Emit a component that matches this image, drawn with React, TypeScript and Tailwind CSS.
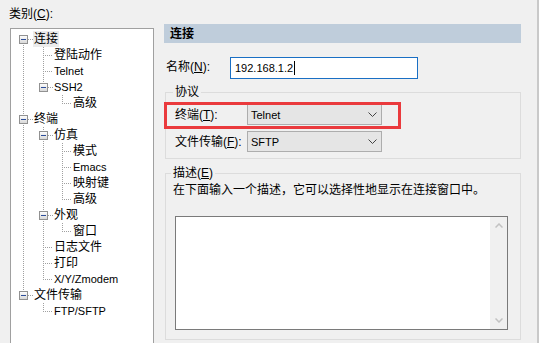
import React from "react";

type Row = { l: number; t: string; box?: boolean; latin?: boolean; sel?: boolean };

const rows: Row[] = [
  { l: 0, t: "连接", box: true, sel: true },
  { l: 1, t: "登陆动作" },
  { l: 1, t: "Telnet", latin: true },
  { l: 1, t: "SSH2", box: true, latin: true },
  { l: 2, t: "高级" },
  { l: 0, t: "终端", box: true },
  { l: 1, t: "仿真", box: true },
  { l: 2, t: "模式" },
  { l: 2, t: "Emacs", latin: true },
  { l: 2, t: "映射键" },
  { l: 2, t: "高级" },
  { l: 1, t: "外观", box: true },
  { l: 2, t: "窗口" },
  { l: 1, t: "日志文件" },
  { l: 1, t: "打印" },
  { l: 1, t: "X/Y/Zmodem", latin: true },
  { l: 0, t: "文件传输", box: true },
  { l: 1, t: "FTP/SFTP", latin: true },
];

const cx = [12, 32, 51];
const textX = [23, 43, 62];

function hasNext(i: number): boolean {
  for (let j = i + 1; j < rows.length; j++) {
    if (rows[j].l < rows[i].l) return false;
    if (rows[j].l === rows[i].l) return true;
  }
  return false;
}

function ancestorCont(i: number, k: number): boolean {
  for (let j = i - 1; j >= 0; j--) {
    if (rows[j].l === k) return hasNext(j);
  }
  return false;
}

const DOT = "#a0a0a0";

function Guides({ i }: { i: number }) {
  const r = rows[i];
  const L = r.l;
  const w = textX[L];
  const lines: React.ReactNode[] = [];
  for (let k = 0; k < L; k++) {
    if (ancestorCont(i, k)) {
      lines.push(
        <line key={"a" + k} x1={cx[k] + 0.5} y1={0} x2={cx[k] + 0.5} y2={16} stroke={DOT} strokeDasharray="1 1" />
      );
    }
  }
  const c = cx[L] + 0.5;
  if (i !== 0) {
    lines.push(<line key="up" x1={c} y1={0} x2={c} y2={8} stroke={DOT} strokeDasharray="1 1" />);
  }
  if (hasNext(i)) {
    lines.push(<line key="dn" x1={c} y1={8} x2={c} y2={16} stroke={DOT} strokeDasharray="1 1" />);
  }
  const hx1 = r.box ? cx[L] + 5 : cx[L];
  lines.push(
    <line key="h" x1={hx1} y1={8.5} x2={textX[L] - 1} y2={8.5} stroke={DOT} strokeDasharray="1 1" />
  );
  return (
    <svg width={w} height={16} className="shrink-0" shapeRendering="crispEdges">
      <defs>
        <linearGradient id="bx" x1="0" y1="0" x2="0" y2="1">
          <stop offset="0" stopColor="#ffffff" />
          <stop offset="1" stopColor="#d6d6d6" />
        </linearGradient>
      </defs>
      {lines}
      {r.box && (
        <g>
          <rect x={cx[L] - 4 + 0.5} y={4.5} width={8} height={8} fill="url(#bx)" stroke="#919191" />
          <line x1={cx[L] - 2} y1={8.5} x2={cx[L] + 3} y2={8.5} stroke="#2c4d9a" />
        </g>
      )}
    </svg>
  );
}

function Chevron({ up }: { up?: boolean }) {
  return up ? (
    <svg width="8" height="5" viewBox="0 0 8 5">
      <path d="M0.5 4.5 L4 1 L7.5 4.5" fill="none" stroke="#c2c2c2" strokeWidth="1.5" />
    </svg>
  ) : (
    <svg width="8" height="5" viewBox="0 0 8 5">
      <path d="M0.5 0.5 L4 4 L7.5 0.5" fill="none" stroke="#c2c2c2" strokeWidth="1.5" />
    </svg>
  );
}

function SelectBox({ value }: { value: string }) {
  return (
    <div className="w-[135px] h-[21px] border border-[#adadad] bg-[#e5e5e5] flex items-center justify-between pl-[3px] pr-[4px]">
      <span className="text-[11px] leading-[16px] text-black">{value}</span>
      <svg width="9" height="5" viewBox="0 0 9 5">
        <path d="M0.5 0.5 L4.5 4.5 L8.5 0.5" fill="none" stroke="#444" strokeWidth="1" />
      </svg>
    </div>
  );
}

export default function App() {
  return (
    <div className="w-[539px] h-[343px] overflow-hidden bg-[#f0f0f0] flex font-['Liberation_Sans','Noto_Sans_CJK_SC',sans-serif] text-black text-[12px] leading-[16px]">
      {/* Left column */}
      <div className="w-[154px] shrink-0 pl-[9px] pt-[6px] flex flex-col">
        <div className="h-[16px]">
          类别(<span className="underline">C</span>):
        </div>
        <div className="mt-[6px] ml-[1px] w-[144px] h-[330px] shrink-0 border border-[#a0a0a0] bg-white pt-[2px]">
          {rows.map((r, i) => (
            <div key={i} className="h-[16px] flex items-center">
              <Guides i={i} />
              <span
                className={
                  (r.latin ? "text-[11px] " : "text-[12px] ") +
                  "whitespace-nowrap leading-[16px] " +
                  (r.sel ? "bg-[#ececec] -ml-[1px] px-[1px]" : "")
                }
              >
                {r.t}
              </span>
            </div>
          ))}
        </div>
      </div>

      {/* Right column */}
      <div className="ml-[10px] w-[357px] shrink-0 flex flex-col">
        <div className="mt-[24px] h-[19px] bg-[#bfcddb] flex items-center pl-[6px] font-bold">连接</div>

        <div className="mt-[14px] h-[22px] flex items-center">
          <div className="w-[66px] pl-[2px] mb-[3px]">
            名称(<span className="underline">N</span>):
          </div>
          <div className="w-[188px] h-[22px] border border-[#1a6fc4] bg-white flex items-center pl-[4px]">
            <span className="text-[11px]">192.168.1.2</span>
            <span className="inline-block w-[1px] h-[14px] bg-black ml-[1px]" />
          </div>
        </div>

        <fieldset className="mt-[5px] ml-[1px] w-[356px] border border-[#dcdcdc] p-0 m-0">
          <legend className="ml-[7px] px-[2px] leading-[16px]">协议</legend>
          <div className="pl-[9px] pt-[4px] pb-[6px] flex flex-col gap-[6px]">
            <div className="relative h-[21px] flex items-center">
              <div className="w-[72px]">
                终端(<span className="underline">T</span>):
              </div>
              <SelectBox value="Telnet" />
              <div className="absolute left-[-11px] top-[-2px] w-[237px] h-[27px] border-[3px] border-[#ea3a3d] pointer-events-none" />
            </div>
            <div className="h-[21px] flex items-center">
              <div className="w-[72px]">
                文件传输(<span className="underline">F</span>):
              </div>
              <SelectBox value="SFTP" />
            </div>
          </div>
        </fieldset>

        <fieldset className="mt-[6px] ml-[1px] w-[356px] border border-[#dcdcdc] p-0 m-0">
          <legend className="ml-[5px] px-[2px] leading-[16px]">
            描述(<span className="underline">E</span>)
          </legend>
          <div className="pl-[7px] pt-[1px] pb-[9px]">
            <div className="whitespace-nowrap">在下面输入一个描述，它可以选择性地显示在连接窗口中。</div>
            <div className="mt-[18px] ml-[2px] w-[333px] h-[114px] border border-[#7a7a7a] bg-white flex justify-end">
              <div className="w-[17px] h-full bg-[#f0f0f0] flex flex-col items-center justify-between pt-[6px] pb-[6px]">
                <Chevron up />
                <Chevron />
              </div>
            </div>
          </div>
        </fieldset>
      </div>

      <div className="flex-1" />
      <div className="w-[2px] h-full bg-[#c9c9c9]" />
    </div>
  );
}
